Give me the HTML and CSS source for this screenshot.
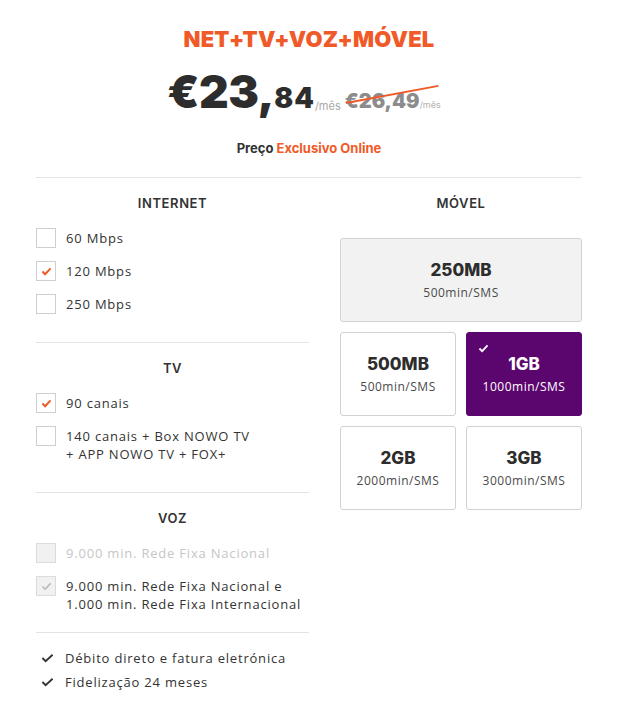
FILE: index.html
```html
<!DOCTYPE html>
<html lang="pt">
<head>
<meta charset="utf-8">
<title>NET+TV+VOZ+MÓVEL</title>
<link rel="stylesheet" href="styles.css">
</head>
<body>
<div class="page">
  <header class="hero">
    <h1 class="title">NET+TV+VOZ+MÓVEL</h1>
    <div class="price">
      <span class="price-int">€23,</span><span class="price-dec">84</span><span class="price-per">/mês</span>
      <span class="old"><span class="old-val">€26,49</span><span class="old-per">/mês</span></span>
    </div>
    <p class="exclusive">Preço <span class="accent">Exclusivo Online</span></p>
  </header>

  <div class="cols">
    <div class="left">
      <section class="group">
        <h2 class="group-title">INTERNET</h2>
        <ul class="opts">
          <li class="opt"><span class="box"></span><span class="lbl">60 Mbps</span></li>
          <li class="opt"><span class="box checked"><svg viewBox="0 0 12 10" width="11" height="9"><path d="M1.5 5 L4.5 8 L10.5 1.5" fill="none" stroke="#f05a28" stroke-width="2.2"/></svg></span><span class="lbl">120 Mbps</span></li>
          <li class="opt"><span class="box"></span><span class="lbl">250 Mbps</span></li>
        </ul>
      </section>
      <section class="group group-tv">
        <h2 class="group-title">TV</h2>
        <ul class="opts">
          <li class="opt"><span class="box checked"><svg viewBox="0 0 12 10" width="11" height="9"><path d="M1.5 5 L4.5 8 L10.5 1.5" fill="none" stroke="#f05a28" stroke-width="2.2"/></svg></span><span class="lbl">90 canais</span></li>
          <li class="opt"><span class="box"></span><span class="lbl">140 canais + Box NOWO TV<br>+ APP NOWO TV + FOX+</span></li>
        </ul>
      </section>
      <section class="group group-voz">
        <h2 class="group-title">VOZ</h2>
        <ul class="opts">
          <li class="opt disabled"><span class="box grey"></span><span class="lbl">9.000 min. Rede Fixa Nacional</span></li>
          <li class="opt"><span class="box grey"><svg viewBox="0 0 12 10" width="11" height="9"><path d="M1.5 5 L4.5 8 L10.5 1.5" fill="none" stroke="#b9b9b9" stroke-width="1.8"/></svg></span><span class="lbl">9.000 min. Rede Fixa Nacional e<br>1.000 min. Rede Fixa Internacional</span></li>
        </ul>
      </section>
      <ul class="extras">
        <li class="extra"><svg viewBox="0 0 14 10" width="13" height="10"><path d="M1.5 5 L5 8.5 L12.5 1.5" fill="none" stroke="#333" stroke-width="2"/></svg><span>Débito direto e fatura eletrónica</span></li>
        <li class="extra"><svg viewBox="0 0 14 10" width="13" height="10"><path d="M1.5 5 L5 8.5 L12.5 1.5" fill="none" stroke="#333" stroke-width="2"/></svg><span>Fidelização 24 meses</span></li>
      </ul>
    </div>

    <div class="right">
      <h2 class="group-title mob-title">MÓVEL</h2>
      <div class="plans">
        <div class="plan plan-wide"><span class="plan-data">250MB</span><span class="plan-min">500min/SMS</span></div>
        <div class="plan"><span class="plan-data">500MB</span><span class="plan-min">500min/SMS</span></div>
        <div class="plan selected"><svg class="tick" viewBox="0 0 12 10" width="11" height="9"><path d="M1.5 5 L4.5 8 L10.5 1.5" fill="none" stroke="#fff" stroke-width="2"/></svg><span class="plan-data">1GB</span><span class="plan-min">1000min/SMS</span></div>
        <div class="plan"><span class="plan-data">2GB</span><span class="plan-min">2000min/SMS</span></div>
        <div class="plan"><span class="plan-data">3GB</span><span class="plan-min">3000min/SMS</span></div>
      </div>
    </div>
  </div>
</div>
</body>
</html>
```
FILE: styles.css
```css
* { box-sizing: border-box; }
html, body { margin: 0; padding: 0; background: #fff; }
body {
  font-family: "Open Sans", "Liberation Sans", sans-serif;
  color: #333;
}
.page {
  width: 546px;
  margin: 0 auto;
}
.hero {
  text-align: center;
  padding-top: 26px;
  border-bottom: 1px solid #e3e3e3;
  padding-bottom: 20px;
}
.title {
  margin: 0;
  font-family: Inter, "Liberation Sans", sans-serif;
  font-weight: 900;
  font-size: 22px;
  line-height: 26px;
  color: #f05a28;
  letter-spacing: 0.2px;
}
.price {
  display: flex;
  justify-content: center;
  align-items: baseline;
  margin-top: 13px;
  height: 52px;
  font-family: Inter, "Liberation Sans", sans-serif;
  padding-right: 10px;
}
.price-int {
  font-size: 46px;
  font-weight: 900;
  color: #2d2d2d;
  letter-spacing: -0.5px;
  line-height: 52px;
}
.price-dec {
  font-size: 28px;
  font-weight: 900;
  color: #2d2d2d;
  letter-spacing: 1px;
}
.price-per {
  font-size: 11px;
  color: #a8a8a8;
  margin-right: 4px;
  position: relative;
  top: 2px;
}
.old {
  position: relative;
  display: inline-flex;
  align-items: baseline;
}
.old::after {
  content: "";
  position: absolute;
  left: 1px;
  top: 50%;
  width: 94px;
  height: 2px;
  background: #f05a28;
  transform: rotate(-10.5deg);
  transform-origin: left center;
  margin-top: 1px;
}
.old-val {
  font-size: 20px;
  font-weight: 900;
  color: #8c8c8c;
}
.old-per {
  font-size: 9px;
  color: #b0b0b0;
}
.exclusive {
  margin: 22px 0 0;
  font-family: Inter, "Liberation Sans", sans-serif;
  font-weight: 700;
  font-size: 13px;
  line-height: 18px;
  color: #333;
}
.accent { color: #f05a28; }

.cols {
  display: grid;
  grid-template-columns: 273px 242px;
  column-gap: 31px;
}
.group {
  border-bottom: 1px solid #e3e3e3;
  padding: 15px 0 28px;
}
.group-tv { padding-bottom: 29px; }
.group-voz { padding-bottom: 19px; }
.group-title {
  margin: 0 0 15px;
  text-align: center;
  font-family: Inter, "Liberation Sans", sans-serif;
  font-weight: 600;
  font-size: 13px;
  line-height: 20px;
  letter-spacing: 0.6px;
  color: #333;
}
.opts {
  list-style: none;
  margin: 0;
  padding: 0;
  display: flex;
  flex-direction: column;
  gap: 13px;
}
.opt {
  display: flex;
  align-items: flex-start;
  gap: 10px;
}
.box {
  flex: none;
  width: 20px;
  height: 20px;
  border: 1px solid #cfcfcf;
  background: #fff;
  display: flex;
  align-items: center;
  justify-content: center;
}
.box.grey {
  background: #f1f1f1;
  border-color: #dcdcdc;
}
.lbl {
  font-size: 13px;
  line-height: 18px;
  padding-top: 1px;
  letter-spacing: 0.8px;
  color: #333;
}
.opt.disabled .lbl { color: #c6c6c6; }

.extras {
  list-style: none;
  margin: 0;
  padding: 16px 0 0;
  display: flex;
  flex-direction: column;
  gap: 6px;
}
.extra {
  display: flex;
  align-items: center;
  gap: 11px;
  padding-left: 5px;
  font-size: 13px;
  line-height: 18px;
  letter-spacing: 0.8px;
}

.right { padding-top: 15px; }
.mob-title { margin-bottom: 25px; }
.plans {
  display: grid;
  grid-template-columns: 1fr 1fr;
  gap: 10px;
}
.plan {
  position: relative;
  height: 84px;
  border: 1px solid #d2d2d2;
  border-radius: 3px;
  background: #fff;
  display: flex;
  flex-direction: column;
  align-items: center;
  justify-content: center;
  gap: 5px;
}
.plan-wide {
  grid-column: 1 / span 2;
  background: #f2f2f2;
}
.plan-data {
  font-family: Inter, "Liberation Sans", sans-serif;
  font-weight: 800;
  font-size: 17px;
  line-height: 20px;
  color: #2d2d2d;
}
.plan-min {
  font-size: 12px;
  line-height: 16px;
  color: #4a4a4a;
  letter-spacing: 0.5px;
}
.plan.selected {
  background: #5b066f;
  border-color: #5b066f;
}
.plan.selected .plan-data,
.plan.selected .plan-min { color: #fff; }
.tick {
  position: absolute;
  left: 11px;
  top: 11px;
}
```
